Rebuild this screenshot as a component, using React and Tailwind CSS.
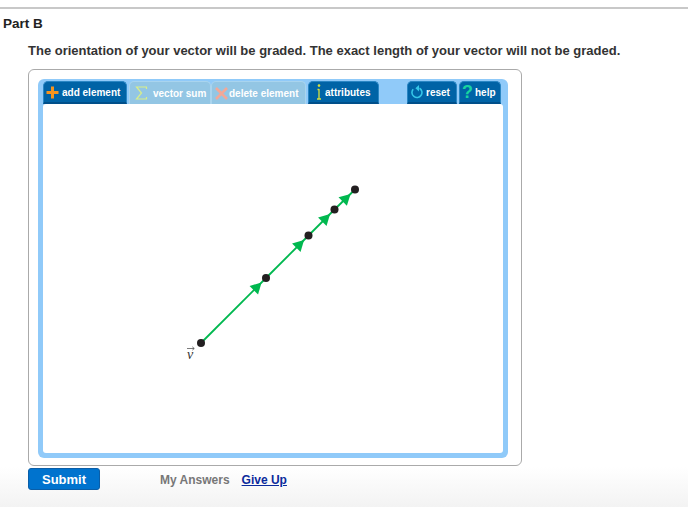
import React from 'react';

const font = { fontFamily: '"Liberation Sans", Arial, sans-serif' };

const Tab = ({ className, children }) => (
  <div className={`h-[23px] flex items-center rounded-t-[5px] border-t border-x text-[10px] font-bold text-white ${className}`}>
    {children}
  </div>
);

const DarkTab = ({ className, children }) => (
  <Tab className={`bg-[#0063a6] border-[#2a86c4] border-b-2 border-b-[#004f8a] ${className}`}>{children}</Tab>
);

const LightTab = ({ className, children }) => (
  <Tab className={`bg-[#93c6e4] border-[#a9d4ee] ${className}`}>{children}</Tab>
);

const Plus = () => (
  <svg width="13" height="13" viewBox="0 0 13 13" className="shrink-0">
    <path d="M6.5 0.5v12M0.5 6.5h12" stroke="#f7941d" strokeWidth="3" />
  </svg>
);

const Sigma = () => (
  <svg width="13" height="14" viewBox="0 0 13 14" className="shrink-0">
    <path d="M11.5 3V1H1.5L6.5 7 1.5 13h10v-2" fill="none" stroke="#d8ee8a" strokeWidth="1.2" />
  </svg>
);

const Cross = () => (
  <svg width="13" height="13" viewBox="0 0 13 13" className="shrink-0">
    <path d="M1 1l11 11M12 1L1 12" stroke="#f2a898" strokeWidth="2.6" />
  </svg>
);

const Info = () => (
  <svg width="6" height="16" viewBox="0 0 6 16" className="shrink-0">
    <circle cx="3" cy="1.6" r="1.3" fill="#d7e03a" />
    <path d="M3 5v9.5M1 15h4M1.5 5.5H3" fill="none" stroke="#d7e03a" strokeWidth="1.3" />
  </svg>
);

const Reset = () => (
  <svg width="12" height="14" viewBox="0 0 12 14" className="shrink-0">
    <path d="M2.2 4.2A5 5 0 1 0 8.5 3.2" fill="none" stroke="#35c6e8" strokeWidth="1.6" />
    <path d="M8 0v6.6L4.4 3.2z" fill="#35c6e8" />
  </svg>
);

const segments = [
  [201, 343, 266, 278],
  [266, 278, 308.5, 235.5],
  [308.5, 235.5, 334.5, 209.5],
  [334.5, 209.5, 355, 189.5],
];

// coordinates above are page pixels, the canvas starts at 43,104
const Diagram = () => (
  <svg width="460" height="349" viewBox="43 104 460 349" className="block">
    {segments.map(([x1, y1, x2, y2]) => {
      const angle = (Math.atan2(y2 - y1, x2 - x1) * 180) / Math.PI;
      return (
        <g key={x1}>
          <line x1={x1} y1={y1} x2={x2} y2={y2} stroke="#00b84f" strokeWidth="1.8" />
          <polygon
            points="-13,-6 -2,0 -13,6"
            fill="#00b84f"
            transform={`translate(${x2 - 3} ${y2 + 3}) rotate(${angle})`}
          />
        </g>
      );
    })}
    {[[201, 343], [266, 278], [308.5, 235.5], [334.5, 209.5], [355, 189.5]].map(([cx, cy]) => (
      <circle key={cx} cx={cx} cy={cy} r="4" fill="#231f20" />
    ))}
    <path d="M187 348.5h7M192.3 346.8l2 1.7-2 1.7" fill="none" stroke="#444" strokeWidth="0.7" />
    <text x="187" y="359" fontSize="14" fontStyle="italic" fill="#333" style={{ fontFamily: '"Liberation Serif", serif' }}>v</text>
  </svg>
);

export default function App() {
  return (
    <div style={font} className="w-[688px] h-[507px] overflow-hidden pt-[7px] bg-gradient-to-b from-white from-[92%] to-[#f3f3f3]">
      <div className="h-[2px] bg-[#c8c8c8]" />
      <h2 className="mt-[7px] ml-[3px] text-[13.5px] leading-[15px] font-bold text-[#222]">Part B</h2>
      <p className="mt-[12px] ml-7 text-[13px] leading-[15px] font-bold text-[#333]">
        The orientation of your vector will be graded. The exact length of your vector will not be graded.
      </p>

      <div className="mt-[11px] ml-7 w-[494px] h-[397px] rounded-[6px] border border-[#aaaaaa] bg-white pt-[9px] pl-[9px]">
        <div className="w-[470px] h-[379px] rounded-[6px] bg-[#90caf9] pt-[2px] pl-[5px] pr-[5px] pb-[5px] flex flex-col">
          <div className="flex h-[23px] shrink-0">
            <DarkTab className="w-[84px] pl-[2px] gap-[3px]"><Plus /><span className="pt-[1px]">add element</span></DarkTab>
            <LightTab className="w-[82px] ml-[2px] pl-[5px] gap-[5px]"><Sigma /><span className="pt-[1px]">vector sum</span></LightTab>
            <LightTab className="w-[95px] pl-[3px] gap-[1px]"><Cross /><span className="pt-[1px]">delete element</span></LightTab>
            <DarkTab className="w-[71px] ml-[2px] pl-[7px] gap-[3px]"><Info /><span className="pt-[1px]">attributes</span></DarkTab>
            <DarkTab className="w-[50px] ml-[28px] pl-[3px] gap-[3px]"><Reset /><span className="pt-[1px]">reset</span></DarkTab>
            <DarkTab className="w-[42px] ml-[2px] pl-[2px] gap-[2px]">
              <span className="text-[18px] leading-none text-[#19d3a0]">?</span><span className="pt-[1px]">help</span>
            </DarkTab>
          </div>
          <div className="flex-1 rounded-[3px] bg-white">
            <Diagram />
          </div>
        </div>
      </div>

      <div className="mt-[2px] ml-7 flex items-center">
        <button className="w-[72px] h-[22px] pt-[1px] rounded-[3px] border border-[#0a5ea8] bg-[#0073ce] text-[13px] font-bold text-white">
          Submit
        </button>
        <span className="ml-[60px] pt-[1px] text-[12px] font-bold text-[#777]">My Answers</span>
        <a className="ml-3 pt-[1px] text-[12px] font-bold text-[#0b2a9c] underline">Give Up</a>
      </div>
    </div>
  );
}
